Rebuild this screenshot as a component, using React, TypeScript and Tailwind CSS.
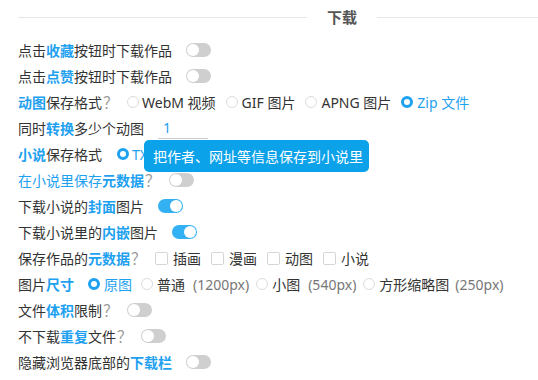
import React from "react";

const BLUE = "text-[#1ea1f0]";

function Key({ children }: { children: React.ReactNode }) {
  return <span className={`${BLUE} font-bold`}>{children}</span>;
}

function Help() {
  return (
    <span
      className="inline-block w-[11px] overflow-visible whitespace-nowrap text-[#999] text-[15px] pl-[1px]"
      style={{ fontFamily: '"Noto Sans CJK SC", sans-serif' }}
    >
      ？
    </span>
  );
}

function Toggle({ on = false, ml = "ml-[14px]" }: { on?: boolean; ml?: string }) {
  return (
    <span
      className={`${ml} relative inline-block w-[25px] h-[14px] rounded-full ${
        on ? "bg-[#33b1f3]" : "bg-[#cfcfcf]"
      }`}
    >
      <span
        className={`absolute top-[1px] w-[12px] h-[12px] rounded-full bg-white ${
          on ? "right-[1px]" : "left-[1px]"
        }`}
      />
    </span>
  );
}

function Radio({ checked = false, ml = "ml-[10px]" }: { checked?: boolean; ml?: string }) {
  return (
    <span
      className={`${ml} inline-block w-[12px] h-[12px] rounded-full bg-white shrink-0 ${
        checked ? "border-[3px] border-[#1ea1f0]" : "border border-[#dcdce0]"
      }`}
    />
  );
}

function Check({ ml = "ml-[10px]" }: { ml?: string }) {
  return (
    <span className={`${ml} inline-block w-[13px] h-[13px] rounded-[2px] border border-[#d6d6da] bg-white shrink-0`} />
  );
}

function Row({ children, className = "" }: { children: React.ReactNode; className?: string }) {
  return <div className={`relative flex items-center h-[26px] whitespace-nowrap ${className}`}>{children}</div>;
}

export default function App() {
  return (
    <div
      className="w-[538px] h-[380px] bg-white overflow-hidden pl-[18px] text-[14px] text-[#333]"
      style={{ fontFamily: '"Noto Sans", "Noto Sans CJK SC", sans-serif' }}
    >
      <div className="flex items-center h-[34px]">
        <div className="w-[289px] h-px bg-[#e6e6e6]" />
        <div className="px-5 text-[15px] font-bold text-[#555]">下载</div>
        <div className="flex-1 h-px bg-[#e6e6e6]" />
      </div>
      <div className="pt-[3px]">
        <Row>
          <span>点击<Key>收藏</Key>按钮时下载作品</span>
          <Toggle />
        </Row>
        <Row>
          <span>点击<Key>点赞</Key>按钮时下载作品</span>
          <Toggle />
        </Row>
        <Row>
          <span><Key>动图</Key>保存格式</span>
          <Help />
          <Radio ml="ml-[14px]" />
          <span className="ml-[3px]">WebM 视频</span>
          <Radio />
          <span className="ml-[4px]">GIF 图片</span>
          <Radio />
          <span className="ml-[4px]">APNG 图片</span>
          <Radio checked />
          <span className={`ml-[4px] ${BLUE}`}>Zip 文件</span>
        </Row>
        <Row>
          <span>同时<Key>转换</Key>多少个动图</span>
          <span className={`ml-[14px] w-[50px] h-[21px] mt-[1px] border-b border-[#cfcfcf] pl-[5px] leading-[20px] ${BLUE}`}>1</span>
        </Row>
        <Row>
          <span><Key>小说</Key>保存格式</span>
          <Radio checked ml="ml-[15px]" />
          <span className={`ml-[3px] ${BLUE}`}>TXT</span>
          <div className="absolute z-10 left-[126px] top-[-1px] w-[225px] h-[32px] rounded-[5px] bg-[#0ba2ea] text-white flex items-center pl-[9px] text-[14px]">
            把作者、网址等信息保存到小说里
          </div>
        </Row>
        <Row>
          <span className={BLUE}>在小说里保存<span className="font-bold">元数据</span></span>
          <Help />
          <Toggle />
        </Row>
        <Row>
          <span>下载小说的<Key>封面</Key>图片</span>
          <Toggle on />
        </Row>
        <Row>
          <span>下载小说里的<Key>内嵌</Key>图片</span>
          <Toggle on />
        </Row>
        <Row>
          <span>保存作品的<Key>元数据</Key></span>
          <Help />
          <Check ml="ml-[14px]" />
          <span className="ml-[5px]">插画</span>
          <Check />
          <span className="ml-[5px]">漫画</span>
          <Check />
          <span className="ml-[5px]">动图</span>
          <Check />
          <span className="ml-[5px]">小说</span>
        </Row>
        <Row>
          <span>图片<Key>尺寸</Key></span>
          <Radio checked ml="ml-[14px]" />
          <span className={`ml-[4px] ${BLUE}`}>原图</span>
          <Radio ml="ml-[9px]" />
          <span className="ml-[4px]">普通</span>
          <span className="ml-2 text-[#777]">(1200px)</span>
          <Radio ml="ml-[7px]" />
          <span className="ml-[4px]">小图</span>
          <span className="ml-2 text-[#777]">(540px)</span>
          <Radio ml="ml-[7px]" />
          <span className="ml-[4px]">方形缩略图</span>
          <span className="ml-[6px] text-[#777]">(250px)</span>
        </Row>
        <Row>
          <span>文件<Key>体积</Key>限制</span>
          <Help />
          <Toggle />
        </Row>
        <Row>
          <span>不下载<Key>重复</Key>文件</span>
          <Help />
          <Toggle />
        </Row>
        <Row>
          <span>隐藏浏览器底部的<Key>下载栏</Key></span>
          <Toggle />
        </Row>
      </div>
    </div>
  );
}
